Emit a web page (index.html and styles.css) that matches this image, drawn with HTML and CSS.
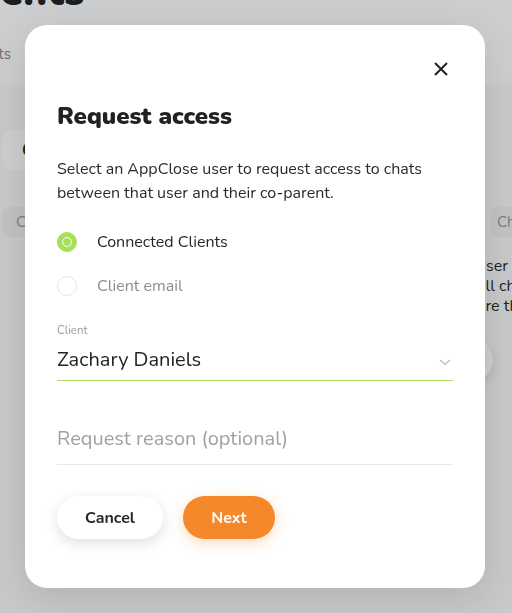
FILE: index.html
```html
<!DOCTYPE html>
<html lang="en">
<head>
<meta charset="utf-8">
<title>Request access</title>
<link rel="stylesheet" href="styles.css">
</head>
<body>
<div class="page">
  <header class="page-head">
    <h1 class="page-title">Clients</h1>
    <nav class="tabs"><span class="tab">Clients</span></nav>
  </header>
  <main class="page-body">
    <div class="card"><span class="card-letter">C</span></div>
    <div class="chip-row">
      <span class="chip">Chats</span>
      <span class="chip chip-right">Chats</span>
    </div>
    <div class="side-text">
      <p>user a</p>
      <p>all ch</p>
      <p>are th</p>
    </div>
    <div class="side-round"></div>
  </main>
</div>

<div class="overlay">
  <section class="modal" role="dialog" aria-labelledby="modal-title">
    <button class="close" aria-label="Close">
      <svg width="14" height="14" viewBox="0 0 14 14"><path d="M1 1 L13 13 M13 1 L1 13" stroke="#222" stroke-width="2" fill="none"/></svg>
    </button>
    <h2 class="title" id="modal-title">Request access</h2>
    <p class="desc">Select an AppClose user to request access to chats between that user and their co-parent.</p>
    <div class="radios">
      <label class="radio-row">
        <span class="radio radio-on"></span>
        <span class="radio-label">Connected Clients</span>
      </label>
      <label class="radio-row">
        <span class="radio"></span>
        <span class="radio-label muted">Client email</span>
      </label>
    </div>
    <div class="field field-select">
      <span class="field-label">Client</span>
      <div class="field-value">
        <span>Zachary Daniels</span>
        <svg class="chev" width="12" height="7" viewBox="0 0 12 7"><path d="M1 1 L6 5.5 L11 1" stroke="#b8b8b8" stroke-width="1.2" fill="none"/></svg>
      </div>
    </div>
    <div class="field field-text">
      <span class="placeholder">Request reason (optional)</span>
    </div>
    <div class="actions">
      <button class="btn btn-cancel">Cancel</button>
      <button class="btn btn-next">Next</button>
    </div>
  </section>
</div>
</body>
</html>
```
FILE: styles.css
```css
* { box-sizing: border-box; }
html, body { margin: 0; padding: 0; }
body {
  width: 512px;
  height: 613px;
  overflow: hidden;
  font-family: "Nunito", "Lato", "Open Sans", sans-serif;
  color: #262626;
  background: #f9f9f9;
}

/* background page */
.page { width: 620px; margin-left: -70px; }
.page-head {
  display: flow-root;
  background: #ffffff;
  height: 85px;
  padding-left: 18px;
}
.page-title {
  margin: -28px 0 0 0;
  font-size: 40px;
  font-weight: 900;
  line-height: 40px;
  height: 40px;
  color: #1f1f1f;
}
.tabs { padding-top: 33px; padding-left: 16px; line-height: 18px; }
.tab { color: #8a8a8a; font-size: 15px; }
.page-body { display: flow-root; padding-top: 45px; }
.card {
  margin-left: 72px;
  width: 200px;
  height: 40px;
  background: #fff;
  border-radius: 10px;
  display: flex;
  align-items: center;
  padding-left: 20px;
}
.card-letter { font-weight: 700; font-size: 17px; }
.chip-row {
  display: flex;
  justify-content: space-between;
  margin-top: 37px;
  margin-left: 72px;
}
.chip {
  height: 30px;
  padding: 0 14px;
  background: #f1f1f1;
  border-radius: 8px;
  display: flex;
  align-items: center;
  color: #999;
  font-size: 15px;
  width: 120px;
}
.chip-right { width: 60px; padding: 0 7px; }
.side-text { margin-left: 547px; margin-top: 19px; font-size: 16px; line-height: 20px; }
.side-text p { margin: 0; }
.side-round {
  margin-left: 519px;
  margin-top: 22px;
  width: 44px;
  height: 44px;
  border-radius: 50%;
  background: #fff;
  box-shadow: 0 4px 12px rgba(0,0,0,0.12);
}

/* overlay + modal */
.overlay {
  position: fixed;
  inset: 0;
  background: rgba(20, 22, 28, 0.21);
  padding: 25px;
}
.modal {
  width: 460px;
  height: 563px;
  background: #fff;
  border-radius: 22px;
  box-shadow: 0 10px 40px rgba(0,0,0,0.12);
  padding: 37px 32px 0 32px;
  display: flex;
  flex-direction: column;
}
.close {
  align-self: flex-end;
  margin-right: 5px;
  width: 14px;
  height: 14px;
  padding: 0;
  border: 0;
  background: none;
  display: block;
}
.close svg { display: block; }
.title {
  margin: 25px 0 0 0;
  font-size: 24px;
  font-weight: 900;
  line-height: 30px;
  color: #222;
}
.desc {
  margin: 27px 0 0 0;
  font-size: 16px;
  line-height: 23.5px;
  color: #2a2a2a;
}
.radios { margin-top: 25px; display: flex; flex-direction: column; gap: 20px; }
.radio-row { display: flex; align-items: center; height: 24px; gap: 20px; }
.radio {
  width: 20px;
  height: 20px;
  border-radius: 50%;
  border: 1px solid #e2e4e6;
  flex: none;
  position: relative;
}
.radio-on { background: #a6e05a; border-color: #a6e05a; }
.radio-on::after {
  content: "";
  position: absolute;
  left: 4px; top: 4px;
  width: 10px; height: 10px;
  border-radius: 50%;
  border: 1.5px solid #fff;
  box-sizing: border-box;
}
.radio-label { font-size: 16px; color: #262626; }
.radio-label.muted { color: #8c8c8c; }

.field-select { margin-top: 25px; border-bottom: 1.5px solid #a6e05a; padding-bottom: 8px; }
.field-label { display: block; font-size: 11.5px; color: #999; line-height: 14px; }
.field-value {
  margin-top: 11px;
  display: flex;
  justify-content: space-between;
  align-items: center;
  font-size: 20px;
  line-height: 24px;
  color: #232323;
}
.chev { margin-right: 2px; margin-top: 4px; }
.field-text {
  margin-top: 46px;
  border-bottom: 1px solid #e6e8ea;
  padding-bottom: 13px;
  font-size: 20px;
  line-height: 24px;
}
.placeholder { color: #9ea2a6; }

.actions { margin-top: 31px; display: flex; gap: 20px; }
.btn {
  height: 43px;
  border: 0;
  border-radius: 22px;
  font-family: inherit;
  font-size: 16px;
  font-weight: 700;
}
.btn-cancel {
  width: 106px;
  background: #fff;
  color: #262626;
  box-shadow: 0 4px 14px rgba(0,0,0,0.13);
}
.btn-next {
  width: 92px;
  background: #f5882a;
  color: #fff;
  box-shadow: 0 4px 14px rgba(245,136,42,0.3);
}
```
